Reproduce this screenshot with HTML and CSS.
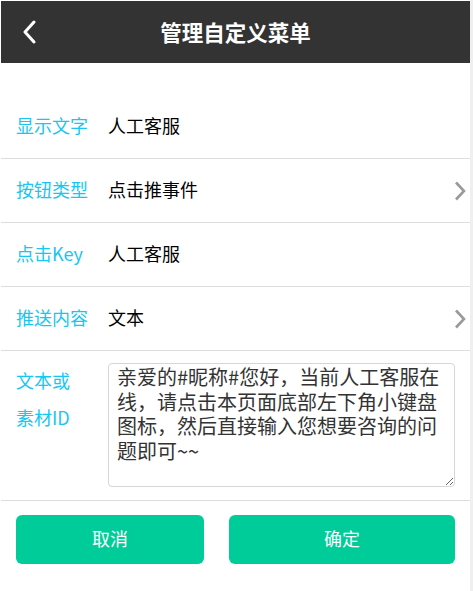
FILE: index.html
```html
<!DOCTYPE html>
<html lang="zh-CN">
<head>
<meta charset="utf-8">
<title>管理自定义菜单</title>
<link rel="stylesheet" href="styles.css">
</head>
<body>
<div class="page">
  <header class="topbar">
    <div class="back">
      <svg width="16" height="24" viewBox="0 0 16 24"><path d="M12 2 L3 12 L12 22" fill="none" stroke="#fff" stroke-width="3" stroke-linecap="round" stroke-linejoin="round"/></svg>
    </div>
    <h1 class="title">管理自定义菜单</h1>
    <div class="spacer"></div>
  </header>
  <div class="form">
    <div class="row">
      <span class="label">显示文字</span>
      <span class="value">人工客服</span>
    </div>
    <div class="row row-select">
      <span class="label">按钮类型</span>
      <span class="value">点击推事件</span>
      <svg class="chev" width="12" height="20" viewBox="0 0 12 20"><path d="M2 1.5 L10 10 L2 18.5" fill="none" stroke="#9a9a9a" stroke-width="2.6"/></svg>
    </div>
    <div class="row">
      <span class="label">点击Key</span>
      <span class="value">人工客服</span>
    </div>
    <div class="row row-select">
      <span class="label">推送内容</span>
      <span class="value">文本</span>
      <svg class="chev" width="12" height="20" viewBox="0 0 12 20"><path d="M2 1.5 L10 10 L2 18.5" fill="none" stroke="#9a9a9a" stroke-width="2.6"/></svg>
    </div>
    <div class="row row-text">
      <span class="label label-tall">文本或<br>素材ID</span>
      <textarea class="content">亲爱的#昵称#您好，当前人工客服在线，请点击本页面底部左下角小键盘图标，然后直接输入您想要咨询的问题即可~~</textarea>
    </div>
  </div>
  <div class="actions">
    <button class="btn">取消</button>
    <button class="btn">确定</button>
  </div>
</div>
<div class="scrolltrack"></div>
</body>
</html>
```
FILE: styles.css
```css
html, body {
  margin: 0;
  padding: 0;
  height: 100%;
}
body {
  display: flex;
  background: #fff;
  font-family: "Noto Sans CJK SC", "Noto Sans", sans-serif;
}
.page {
  flex: 1;
  margin: 1px 0 0 1px;
}
.scrolltrack {
  width: 3px;
  background: #efefef;
}
.topbar {
  height: 62px;
  background: #333333;
  display: grid;
  grid-template-columns: 1fr auto 1fr;
  align-items: center;
}
.back {
  padding-left: 21px;
  display: flex;
  align-items: center;
}
.title {
  margin: 0;
  color: #fff;
  font-size: 21.5px;
  font-weight: 700;
  line-height: 1;
  padding-bottom: 1px;
}
.form {
  margin-top: 32px;
}
.row {
  box-sizing: border-box;
  height: 64px;
  display: flex;
  align-items: center;
  padding: 0 15px 3px 15px;
  border-bottom: 1px solid #dddddd;
}
.row-select {
  padding-right: 4px;
}
.label {
  width: 92px;
  flex: none;
  color: #17c6f2;
  font-size: 18px;
}
.value {
  flex: 1;
  color: #000;
  font-size: 18px;
}
.chev {
  flex: none;
  margin-top: 3px;
}
.row-text {
  height: auto;
  align-items: flex-start;
  padding-top: 12px;
  padding-bottom: 13px;
}
.label-tall {
  line-height: 37px;
  margin-top: -1px;
}
.content {
  width: 347px;
  height: 124px;
  box-sizing: border-box;
  border: 1px solid #d6d6d6;
  border-radius: 4px;
  padding: 1px 8px;
  margin: 0;
  font-family: "Noto Sans CJK SC", sans-serif;
  font-size: 20px;
  line-height: 24.5px;
  color: #333;
  resize: vertical;
  outline: none;
}
.actions {
  display: grid;
  grid-template-columns: 188px 226px;
  column-gap: 25px;
  padding: 14px 0 0 15px;
}
.btn {
  height: 49px;
  border: none;
  border-radius: 6px;
  background: #00cc99;
  color: #fff;
  font-family: "Noto Sans CJK SC", sans-serif;
  font-size: 18px;
  padding: 0 0 3px 0;
}
```
